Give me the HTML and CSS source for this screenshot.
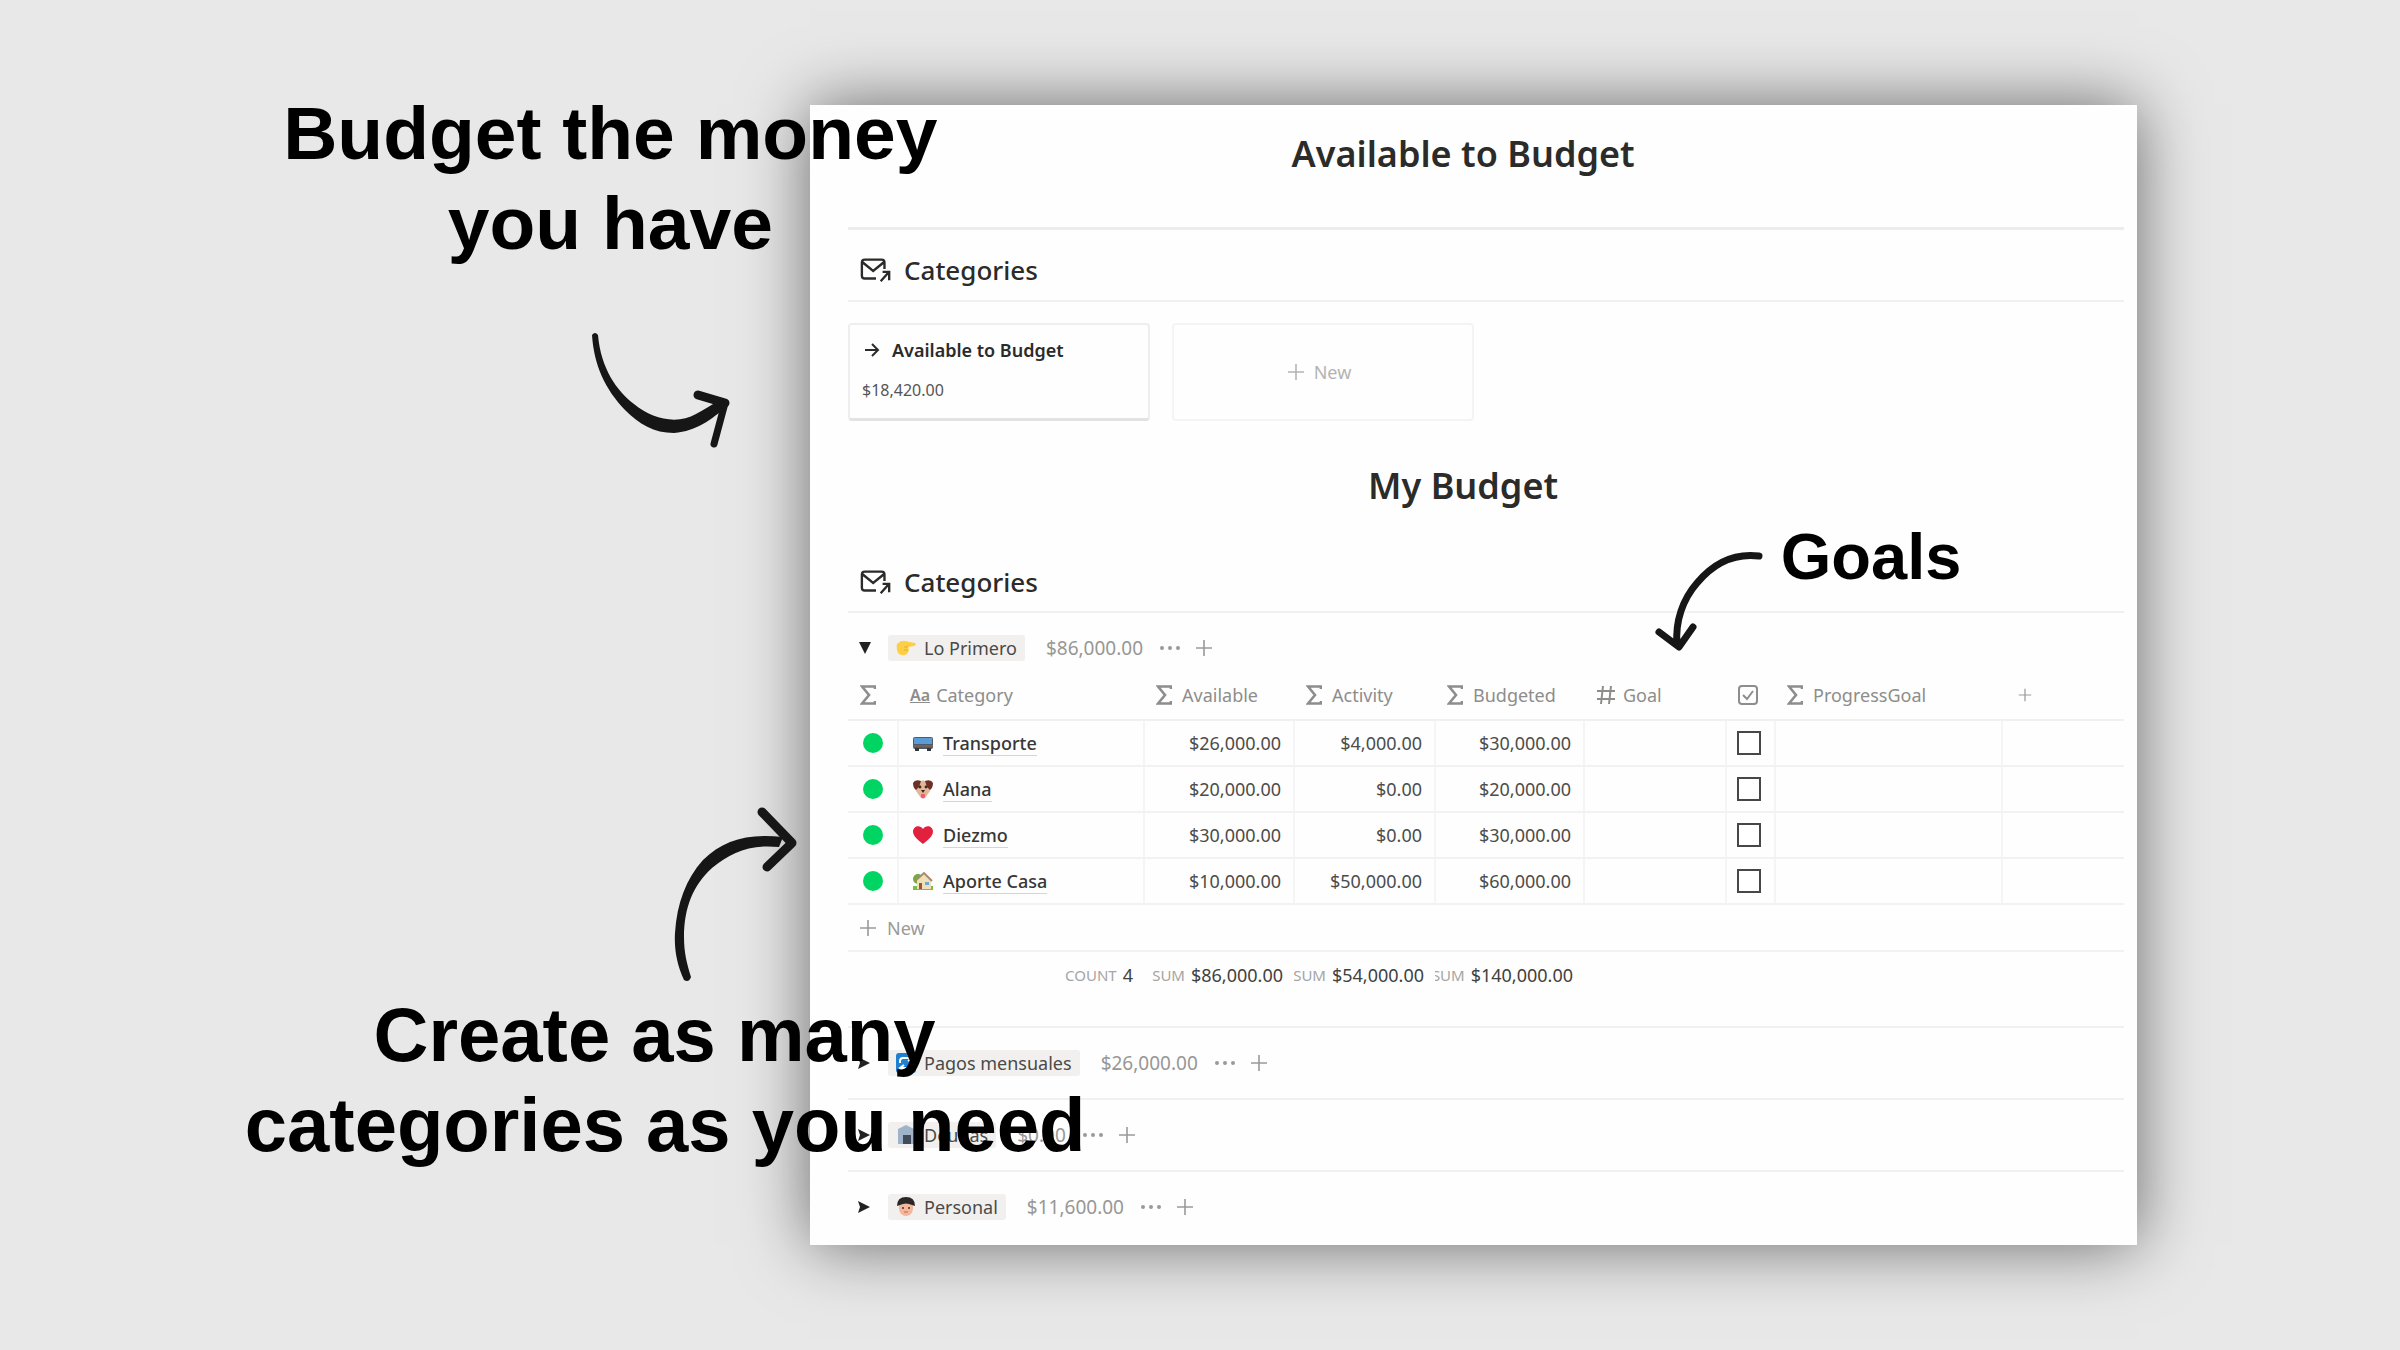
FILE: index.html
```html
<!DOCTYPE html>
<html lang="en">
<head>
<meta charset="utf-8">
<title>My Budget</title>
<link rel="stylesheet" href="styles.css">
</head>
<body>
<svg class="defs" aria-hidden="true">
  <symbol id="sigma" viewBox="0 0 16 20"><path d="M15 4V1.500H2l7 8.500-7 8.500h13V16" fill="none" stroke="currentColor" stroke-width="2.600"/></symbol>
  <symbol id="plus" viewBox="0 0 18 18"><path d="M9 1v16M1 9h16" stroke="currentColor" stroke-width="1.600"/></symbol>
  <symbol id="dots" viewBox="0 0 22 6"><g fill="currentColor"><circle cx="3" cy="3" r="2"/><circle cx="11" cy="3" r="2"/><circle cx="19" cy="3" r="2"/></g></symbol>
  <symbol id="mail" viewBox="0 0 34 26"><path d="M17 22H5a3 3 0 0 1-3-3V5a3 3 0 0 1 3-3h18a3 3 0 0 1 3 3v7M3 5l11 9L25 5M22 25l8-9M24 15h7v9" fill="none" stroke="currentColor" stroke-width="2.500"/></symbol>
  <symbol id="right" viewBox="0 0 12 14"><path d="M0 1l12 6-12 6 2-6z" fill="currentColor"/></symbol>
</svg>
<main class="stage">
  <section class="sheet">
    <h1 class="title">Available to Budget</h1>
    <hr class="rule">
    <h2 class="view"><svg class="mail"><use href="#mail"/></svg>Categories</h2>
    <div class="gallery">
      <article class="tile">
        <h3 class="tile-name"><svg class="go" viewBox="0 0 16 14"><path d="M1 7h13M8 1l6 6-6 6" fill="none" stroke="currentColor" stroke-width="2"/></svg>Available to Budget</h3>
        <p class="tile-sum">$18,420.00</p>
      </article>
      <button class="tile-new"><svg class="plus"><use href="#plus"/></svg>New</button>
    </div>
    <h1 class="title title-second">My Budget</h1>
    <h2 class="view view-second"><svg class="mail"><use href="#mail"/></svg>Categories</h2>

    <div class="group group-open">
      <button class="toggle" aria-label="Collapse"><svg class="down" viewBox="0 0 14 12"><path d="M1 0h12L7 12z" fill="currentColor"/></svg></button>
      <span class="chip"><svg class="emoji" viewBox="0 0 20 20"><path d="M1 6q4-4 8-3l10 2q2 2-1 3l-6 1q2 4-1 7-5 3-9-1-2-5-1-9z" fill="#fdcf46"/><path d="M12 9h-4M12 12H8" stroke="#e9a92c"/></svg>Lo Primero</span>
      <span class="total">$86,000.00</span>
      <button class="act" aria-label="More"><svg class="dots"><use href="#dots"/></svg></button>
      <button class="act" aria-label="Add"><svg class="plus"><use href="#plus"/></svg></button>
    </div>

    <table class="grid">
      <colgroup><col class="c-dot"><col class="c-name"><col class="c-avail"><col class="c-act"><col class="c-bud"><col class="c-goal"><col class="c-check"><col class="c-prog"><col></colgroup>
      <thead>
        <tr>
          <th><span class="head head-dot"><svg class="sigma"><use href="#sigma"/></svg></span></th>
          <th><span class="head"><span class="aa">Aa</span>Category</span></th>
          <th><span class="head"><svg class="sigma"><use href="#sigma"/></svg>Available</span></th>
          <th><span class="head"><svg class="sigma"><use href="#sigma"/></svg>Activity</span></th>
          <th><span class="head"><svg class="sigma"><use href="#sigma"/></svg>Budgeted</span></th>
          <th><span class="head head-goal"><svg class="hash" viewBox="0 0 20 20"><path d="M7 1L5 19M15 1l-2 18M1 6h18M1 14h18" stroke="currentColor" stroke-width="2"/></svg>Goal</span></th>
          <th><span class="head"><svg class="tick" viewBox="0 0 20 20"><rect x="1" y="1" width="18" height="18" rx="3" fill="none" stroke="currentColor" stroke-width="2"/><path d="M5 10l4 4 6-8" fill="none" stroke="currentColor" stroke-width="2"/></svg></span></th>
          <th><span class="head"><svg class="sigma"><use href="#sigma"/></svg>ProgressGoal</span></th>
          <th><button class="act add-col" aria-label="Add column"><svg class="plus-small"><use href="#plus"/></svg></button></th>
        </tr>
      </thead>
      <tbody>
        <tr>
          <td><span class="status"></span></td>
          <td><span class="name"><svg class="emoji" viewBox="0 0 20 20"><rect y="4" width="20" height="12" rx="2" fill="#4d5c68"/><rect x="1" y="5" width="18" height="6" fill="#5b9bd8"/><path d="M0 13h20" stroke="#9a6b48"/><path d="M2 15h4v3H2zM14 15h4v3h-4z" fill="#30363c"/></svg><a href="#transporte">Transporte</a></span></td>
          <td class="num">$26,000.00</td><td class="num">$4,000.00</td><td class="num">$30,000.00</td><td></td>
          <td><input class="box" type="checkbox" aria-label="Transporte goal"></td><td></td><td></td>
        </tr>
        <tr>
          <td><span class="status"></span></td>
          <td><span class="name"><svg class="emoji" viewBox="0 0 20 20"><path d="M2 4Q10-1 18 4l-1 8-5 7H8l-5-7z" fill="#e2b697"/><path d="M0 4q2-4 8-2l-2 6-3 3Q0 9 0 4zM20 4q-2-4-8-2l2 6 3 3q3-2 3-7z" fill="#6d3027"/><circle cx="7" cy="8" r="1.400" fill="#3c2522"/><circle cx="13" cy="8" r="1.400" fill="#3c2522"/><path d="M8 11h4l-2 3z" fill="#3c2522"/><path d="M8 15h4v3q-2 3-4 0z" fill="#ef5e76"/></svg><a href="#alana">Alana</a></span></td>
          <td class="num">$20,000.00</td><td class="num">$0.00</td><td class="num">$20,000.00</td><td></td>
          <td><input class="box" type="checkbox" aria-label="Alana goal"></td><td></td><td></td>
        </tr>
        <tr>
          <td><span class="status"></span></td>
          <td><span class="name"><svg class="emoji" viewBox="0 0 20 20"><path d="M10 19C5 15 0 11 0 6.500 0 1 7-1 10 4c3-5 10-3 10 2.500 0 4.500-5 8.500-10 12.500z" fill="#e2213f"/></svg><a href="#diezmo">Diezmo</a></span></td>
          <td class="num">$30,000.00</td><td class="num">$0.00</td><td class="num">$30,000.00</td><td></td>
          <td><input class="box" type="checkbox" aria-label="Diezmo goal"></td><td></td><td></td>
        </tr>
        <tr>
          <td><span class="status"></span></td>
          <td><span class="name"><svg class="emoji" viewBox="0 0 20 20"><circle cx="5" cy="8" r="5" fill="#6fae3d"/><path d="M0 15h20v4H0z" fill="#7dbb42"/><path d="M4 9l7-6 7 6v9H4z" fill="#f1dfb8"/><path d="M2 10l9-8 8 8" fill="none" stroke="#a98a70" stroke-width="2"/><path d="M6 12h3v6H6z" fill="#8d5a3a"/><path d="M12 11h4v3h-4z" fill="#6aa9d8"/></svg><a href="#aporte-casa">Aporte Casa</a></span></td>
          <td class="num">$10,000.00</td><td class="num">$50,000.00</td><td class="num">$60,000.00</td><td></td>
          <td><input class="box" type="checkbox" aria-label="Aporte Casa goal"></td><td></td><td></td>
        </tr>
      </tbody>
      <tfoot>
        <tr class="new-row"><td colspan="9"><button class="new"><svg class="plus"><use href="#plus"/></svg>New</button></td></tr>
        <tr class="sums">
          <td></td>
          <td><span class="calc"><small>COUNT</small>4</span></td>
          <td><span class="calc"><small>SUM</small>$86,000.00</span></td>
          <td><span class="calc"><small>SUM</small>$54,000.00</span></td>
          <td><span class="calc"><small>SUM</small>$140,000.00</span></td>
          <td colspan="4"></td>
        </tr>
      </tfoot>
    </table>

    <div class="group">
      <button class="toggle" aria-label="Expand"><svg class="right"><use href="#right"/></svg></button>
      <span class="chip"><svg class="emoji" viewBox="0 0 20 20"><rect width="20" height="20" rx="3" fill="#1f7fd0"/><path d="M4 10V8q0-3 3-3h8M12 2l4 3-4 3M16 10v2q0 3-3 3H5M8 12l-4 3 4 3" fill="none" stroke="#fff" stroke-width="2"/></svg>Pagos mensuales</span>
      <span class="total">$26,000.00</span>
      <button class="act" aria-label="More"><svg class="dots"><use href="#dots"/></svg></button>
      <button class="act" aria-label="Add"><svg class="plus"><use href="#plus"/></svg></button>
    </div>
    <div class="group">
      <button class="toggle" aria-label="Expand"><svg class="right"><use href="#right"/></svg></button>
      <span class="chip"><svg class="emoji" viewBox="0 0 20 20"><path d="M2 4l8-4 8 4v15H2z" fill="#9fb4c9"/><path d="M7 10h8v9H7z" fill="#3e4c5c"/></svg>Deudas</span>
      <span class="total">$0.00</span>
      <button class="act" aria-label="More"><svg class="dots"><use href="#dots"/></svg></button>
      <button class="act" aria-label="Add"><svg class="plus"><use href="#plus"/></svg></button>
    </div>
    <div class="group">
      <button class="toggle" aria-label="Expand"><svg class="right"><use href="#right"/></svg></button>
      <span class="chip"><svg class="emoji" viewBox="0 0 20 20"><path d="M3 6h14v6q-1 7-7 7t-7-7z" fill="#f3b79b"/><path d="M1 9Q1 0 10 0t9 9l-3-1q-6-3-12 0z" fill="#2b2627"/><circle cx="7" cy="11" r="1" fill="#4b3029"/><circle cx="13" cy="11" r="1" fill="#4b3029"/><path d="M8 15h4" stroke="#c9655a"/></svg>Personal</span>
      <span class="total">$11,600.00</span>
      <button class="act" aria-label="More"><svg class="dots"><use href="#dots"/></svg></button>
      <button class="act" aria-label="Add"><svg class="plus"><use href="#plus"/></svg></button>
    </div>
  </section>

  <p class="note note-budget">Budget the money<br>you have</p>
  <p class="note note-create">Create as many&nbsp;<br>categories as you need</p>
  <p class="note note-goals">Goals</p>
  <svg class="arrow arrow-budget" viewBox="0 0 140 120"><path d="M0 4Q3 0 6 4C9 38 25 60 42 73 60 88 85 94 104 83 112 79 119 74 126 70l8 6C120 88 105 100 82 102 62 102 47 93 33 79 13 58 2 34 0 4z"/><path class="stroke" d="M106 64l27 8"/><path class="stroke thin" d="M133 72l-11 41"/></svg>
  <svg class="arrow arrow-create" viewBox="0 0 130 180"><path d="M8 177C1 162-2 146-1 130 1 100 10 76 27 57 47 37 72 30 107 34l-4 10C72 41 55 50 36 65 17 82 8 105 8 134 8 150 11 161 15 174q-2 6-7 3z"/><path class="stroke" d="M86 9l30 31-25 24"/></svg>
  <svg class="arrow arrow-goals" viewBox="0 0 120 110"><path class="stroke thin" d="M107 9C74 5 55 24 45 36 31 52 23 74 25 98M7 85l20 15 14-20"/></svg>
</main>
</body>
</html>
```
FILE: styles.css
```css
* { box-sizing: border-box; }
body { margin: 0; background: #e8e8e8; color: #2b2b29; font-family: "Noto Sans", "Open Sans", sans-serif; font-size: 18px; line-height: 24px; }
h1, h2, h3, p { margin: 0; }
button { border: 0; padding: 0; background: none; font: inherit; color: inherit; display: flex; align-items: center; }
.defs { display: none; }
.stage { position: relative; min-height: 100vh; padding: 105px 0; }
.sheet { width: 55.3%; margin-left: 33.75%; padding: 0 13px 3px 38px; background: #fefefe; box-shadow: 0 0 64px rgba(0, 0, 0, .55); }

.title { padding: 26px 46px 0 0; height: 122px; text-align: center; font-size: 36px; line-height: 46px; font-weight: 600; }
.rule { margin: 0; border: 0; height: 3px; background: #ececec; }
.view { display: flex; align-items: center; gap: 12px; height: 72px; padding: 10px 12px 0; border-bottom: 2px solid #f0f0f0; font-size: 26px; line-height: 36px; font-weight: 500; }
.mail { width: 32px; height: 26px; }
.gallery { display: flex; gap: 22px; padding-top: 21px; }
.tile, .tile-new { width: 302px; height: 98px; border-radius: 4px; }
.tile { padding: 13px 12px; border: 2px solid #eee; border-bottom: 3px solid #e2e2e2; }
.tile-name { display: flex; align-items: center; gap: 12px; padding-left: 2px; font-size: 18px; line-height: 24px; font-weight: 600; }
.go { width: 16px; height: 14px; }
.tile-sum { padding-top: 16px; font-size: 16px; line-height: 24px; color: #555; }
.tile-new { justify-content: center; gap: 9px; padding-right: 8px; border: 2px solid #f4f4f4; color: #b4b4b2; }
.title-second { padding-top: 42px; height: 122px; }
.view-second { height: 70px; }

.group { display: flex; align-items: center; height: 72px; padding-left: 10px; border-top: 2px solid #f0f0f0; }
.group-open { height: 60px; padding-top: 10px; border-top: 0; }
.toggle { width: 30px; color: #222; }
.down { width: 14px; height: 12px; }
.right { width: 12px; height: 14px; }
.chip { display: flex; align-items: center; gap: 8px; height: 26px; padding: 0 8px; margin-right: 21px; border-radius: 3px; background: #f1f0ef; color: #4a4a48; }
.emoji { width: 20px; height: 20px; }
.total { margin-right: 16px; font-size: 19px; color: #979795; }
.act { color: #9a9a98; margin-right: 14px; }
.dots { width: 22px; height: 6px; }
.plus { width: 18px; height: 18px; }

.grid { width: 100%; table-layout: fixed; border-collapse: collapse; }
.c-dot { width: 50px; }
.c-name { width: 246px; }
.c-avail { width: 150px; }
.c-act { width: 141px; }
.c-bud { width: 149px; }
.c-goal { width: 142px; }
.c-check { width: 49px; }
.c-prog { width: 227px; }
th, td { padding: 0; text-align: left; font-weight: 400; }
thead th { height: 47px; padding-bottom: 2px; border-bottom: 2px solid #f0f0f0; }
.head { display: flex; align-items: center; gap: 10px; padding-left: 12px; color: #8d8d8b; }
.head-goal { gap: 7px; }
.sigma { width: 16px; height: 20px; }
.hash, .tick { width: 20px; height: 20px; }
.aa { font-size: 16px; font-weight: 600; text-decoration: underline; margin-right: -4px; }
.add-col { padding-left: 16px; }
.plus-small { width: 14px; height: 14px; }
tbody td { height: 46px; border-bottom: 2px solid #f2f2f2; border-right: 2px solid #f5f5f5; }
tbody td:last-child { border-right: 0; }
.status { display: block; width: 20px; height: 20px; margin-left: 15px; border-radius: 50%; background: #00d563; }
.name { display: flex; align-items: center; gap: 10px; padding-left: 14px; }
.name a { color: #373735; font-weight: 500; line-height: 24px; text-decoration: none; border-bottom: 1px solid #d5d5d5; }
.num { padding-right: 12px; text-align: right; color: #4c4c4a; }
.box { appearance: none; display: block; width: 24px; height: 24px; margin: 0 0 0 10px; border: 2px solid #474745; background: #fff; }
.new-row td { height: 47px; border-bottom: 2px solid #f2f2f2; }
.new { gap: 10px; padding-left: 11px; color: #9a9a98; }
.sums td { height: 75px; vertical-align: top; padding-top: 11px; }
.calc { display: flex; justify-content: flex-end; align-items: center; gap: 6px; overflow: hidden; padding-right: 11px; white-space: nowrap; color: #41413f; }
.calc small { font-size: 15px; color: #a5a5a3; }

.note { position: absolute; text-align: center; white-space: nowrap; color: #000; font-family: "Liberation Sans", Arial, sans-serif; font-weight: 700; font-size: 75px; line-height: 90px; }
.note-budget { left: 11.8%; top: 88px; }
.note-create { left: 10.2%; top: 990px; font-size: 76px; }
.note-goals { left: 74.2%; top: 512px; font-size: 65px; }
.arrow { position: absolute; fill: #161616; overflow: visible; }
.arrow .stroke { fill: none; stroke: #161616; stroke-width: 9; stroke-linecap: round; stroke-linejoin: round; }
.arrow .thin { stroke-width: 7; }
.arrow-budget { left: 24.65%; top: 331px; width: 140px; height: 120px; }
.arrow-create { left: 28.15%; top: 803px; width: 130px; height: 180px; }
.arrow-goals { left: 68.83%; top: 547px; width: 120px; height: 110px; }
```
